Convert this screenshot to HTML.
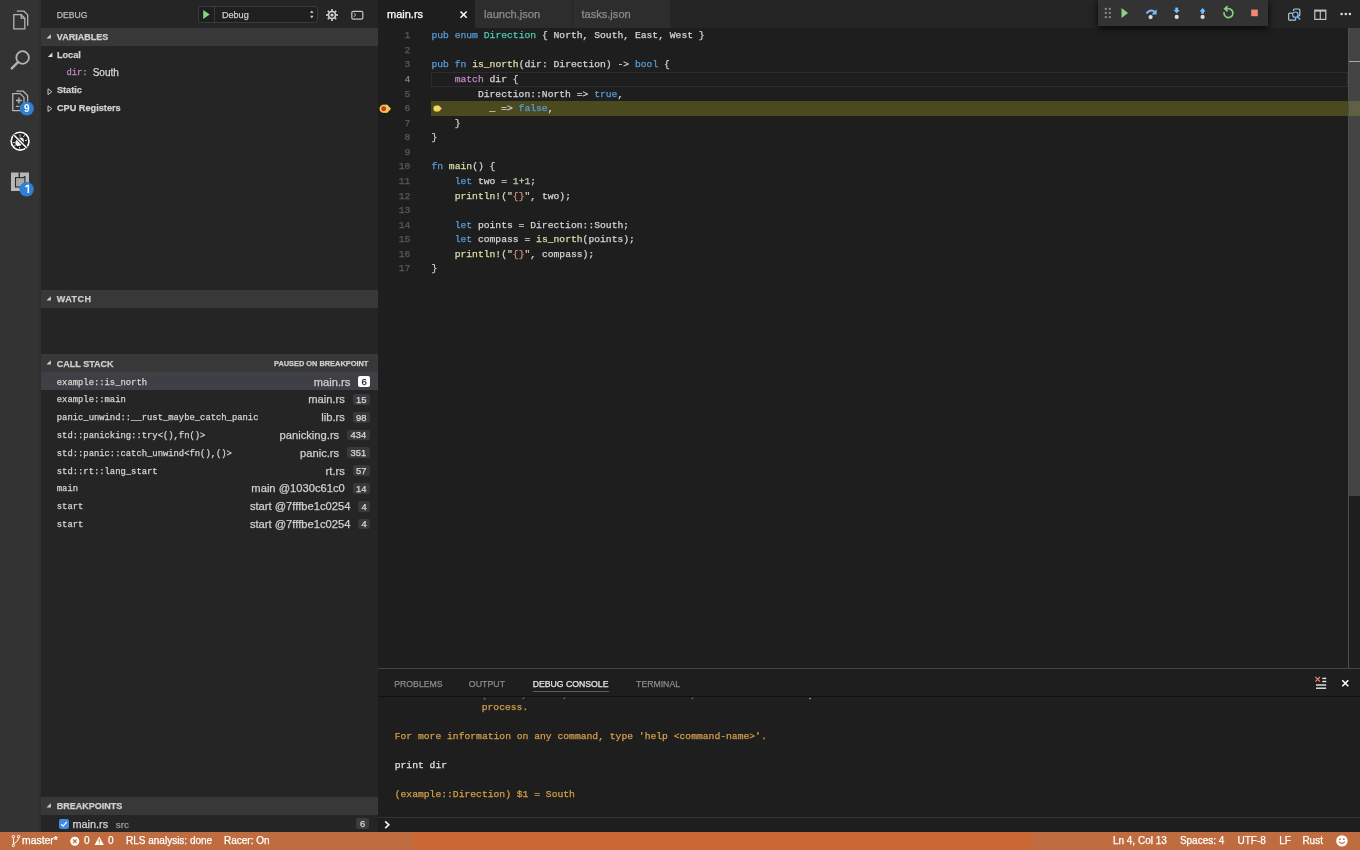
<!DOCTYPE html><html><head><meta charset="utf-8"><style>*{margin:0;padding:0}html,body{width:1360px;height:850px;overflow:hidden;background:#1e1e1e}#root{position:absolute;left:0;top:0;width:1360px;height:850px;will-change:transform;-webkit-text-stroke-width:0.25px}</style></head><body><div id="root"><div style="position:absolute;left:40px;top:0px;width:338px;height:832px;background:#252526;"></div>
<div style="position:absolute;left:0px;top:0px;width:40.6px;height:832px;background:#333333;"></div>
<div style="position:absolute;left:39.4px;top:0px;width:1.2px;height:832px;background:#2f2f2f;"></div>
<div style="position:absolute;left:378px;top:0px;width:982px;height:668px;background:#1e1e1e;"></div>
<div style="position:absolute;left:378px;top:0px;width:982px;height:28.3px;background:#252526;"></div>
<svg width="40" height="200" style="position:absolute;left:0;top:0">
 <g fill="none" stroke="#b4b4b4" stroke-width="1.3">
  <path d="M13.8 14.6h7.4l3.6 3.6v10.6h-11z"/>
  <path d="M21.2 14.6v3.6h3.6"/>
  <path d="M16.8 11.2h7.2l3.7 3.7v10.8"/>
  <circle cx="22.6" cy="57.5" r="6.3" stroke-width="1.8"/>
  <path d="M18 62.2l-6.2 6.2" stroke-width="2.4" stroke-linecap="round"/>
  <path d="M12.8 93.6h7.4l3.8 3.8v13.2h-11.2z"/>
  <path d="M16.4 91.2h6.8l4.4 4.4v6"/>
  <path d="M18.9 97.6v5.8M16 100.5h5.8" stroke-width="1.4"/>
  <path d="M15.9 106.4h3.4" stroke-width="1.2"/>
 </g>
 <circle cx="26.8" cy="108.5" r="7.1" fill="#2f7fd6"/>
 <text x="26.8" y="112.2" font-family="Liberation Sans" font-weight="bold" font-size="10" fill="#fff" text-anchor="middle">9</text>
 <circle cx="20.1" cy="141.2" r="8.9" fill="#232323" stroke="#fff" stroke-width="1.6"/>
 <g fill="#f0f0f0">
  <ellipse cx="19.6" cy="141.8" rx="3.6" ry="4.9" transform="rotate(45 19.6 141.8)"/>
 </g>
 <g stroke="#f0f0f0" stroke-width="0.9" fill="none">
  <path d="M20.2 136.6l-.2-2.2M23.4 137l1.2-1.8M25 140.6l2-.4M14.8 142.4l-1.8.2M15.6 145.2l-1.6 1M19.4 146.8l.4 1.8M22.6 143.4l1.4 2.6"/>
 </g>
 <path d="M13.6 134.7l13 13" stroke="#232323" stroke-width="3.2"/>
 <path d="M13.6 134.7l13 13" stroke="#fff" stroke-width="1.5"/>
 <rect x="11" y="172.5" width="18" height="18.5" fill="#b8b8b8"/>
 <rect x="18.6" y="172.5" width="1.4" height="5" fill="#333"/>
 <rect x="15.5" y="177.6" width="9.4" height="9.4" fill="#a9a9a9" stroke="#2a2a2a" stroke-width="1.1"/>
 <path d="M23.5 176.5l2.2 -0.8-.8 2.2z" fill="#2a2a2a"/>
 <circle cx="26.6" cy="189.3" r="7.2" fill="#2f7fd6"/>
 <path d="M25.4 186.8l1.9-1.3h1v7.5" fill="none" stroke="#fff" stroke-width="1.5"/>
</svg>
<div style="position:absolute;left:56.8px;top:10.72px;line-height:8.6px;font-size:8.6px;font-family:'Liberation Sans',sans-serif;font-weight:400;color:#bbbbbb;white-space:pre;">DEBUG</div>
<div style="position:absolute;left:197.6px;top:5.9px;width:120px;height:17.6px;background:#1f1f1f;border:1px solid #3a3a3a;border-radius:3px;box-sizing:border-box"></div>
<div style="position:absolute;left:214.3px;top:6.5px;width:1px;height:16.4px;background:#3a3a3a;"></div>
<svg width="400" height="30" style="position:absolute;left:0;top:0"><path d="M203.2 10l6.5 4.5-6.5 4.5z" fill="#89d185"/><path d="M310 13l1.8-2.4 1.8 2.4zM310 15.8l1.8 2.4 1.8-2.4z" fill="#cccccc"/></svg>
<div style="position:absolute;left:221.9px;top:10.70px;line-height:9.1px;font-size:9.1px;font-family:'Liberation Sans',sans-serif;font-weight:400;color:#cccccc;white-space:pre;">Debug</div>
<svg width="16" height="16" viewBox="-8 -8 16 16" style="position:absolute;left:323.8px;top:6.7px">
<g fill="#d0d0d0"><rect x="-0.8" y="-6" width="1.6" height="3" transform="rotate(0)"/><rect x="-0.8" y="-6" width="1.6" height="3" transform="rotate(45)"/><rect x="-0.8" y="-6" width="1.6" height="3" transform="rotate(90)"/><rect x="-0.8" y="-6" width="1.6" height="3" transform="rotate(135)"/><rect x="-0.8" y="-6" width="1.6" height="3" transform="rotate(180)"/><rect x="-0.8" y="-6" width="1.6" height="3" transform="rotate(225)"/><rect x="-0.8" y="-6" width="1.6" height="3" transform="rotate(270)"/><rect x="-0.8" y="-6" width="1.6" height="3" transform="rotate(315)"/><circle r="4.3"/></g>
<circle r="2.1" fill="none" stroke="#252526" stroke-width="1.1"/><circle r="0.9" fill="#e0e0e0"/>
</svg>
<svg width="16" height="14" style="position:absolute;left:349px;top:7.5px">
<rect x="2.8" y="3.3" width="11" height="7.8" rx="1.4" fill="none" stroke="#c5c5c5" stroke-width="1.2"/>
<path d="M4.9 5.1l1.8 1.9-1.8 1.9" fill="none" stroke="#c5c5c5" stroke-width="0.9"/>
</svg>
<div style="position:absolute;left:40.6px;top:28px;width:337.4px;height:18px;background:#383839;"></div>
<svg width="8" height="8" style="position:absolute;left:45px;top:33px"><path d="M1.5 5.6L5.8 1.3V5.6z" fill="#d0d0d0"/></svg>
<div style="position:absolute;left:56.8px;top:33.28px;line-height:9px;font-size:9px;font-family:'Liberation Sans',sans-serif;font-weight:700;color:#cfcfcf;white-space:pre;">VARIABLES</div>
<svg width="8" height="8" style="position:absolute;left:47.4px;top:51px"><path d="M0.8 6L5.4 1.4V6z" fill="#d8d8d8"/></svg>
<div style="position:absolute;left:56.9px;top:50.51px;line-height:9.2px;font-size:9.2px;font-family:'Liberation Sans',sans-serif;font-weight:700;color:#d0d0d0;white-space:pre;">Local</div>
<div style="position:absolute;left:66.4px;top:69.38px;line-height:8.9px;font-size:8.9px;font-family:'Liberation Mono',monospace;font-weight:400;color:#c586c0;white-space:pre;">dir:</div>
<div style="position:absolute;left:92.7px;top:67.73px;line-height:10px;font-size:10px;font-family:'Liberation Sans',sans-serif;font-weight:400;color:#d4d4d4;white-space:pre;">South</div>
<svg width="8" height="10" style="position:absolute;left:47.4px;top:87.5px"><path d="M1 0.8L4.8 3.7 1 6.6z" fill="none" stroke="#c8c8c8" stroke-width="1"/></svg>
<div style="position:absolute;left:56.9px;top:86.11px;line-height:9.2px;font-size:9.2px;font-family:'Liberation Sans',sans-serif;font-weight:700;color:#d0d0d0;white-space:pre;">Static</div>
<svg width="8" height="10" style="position:absolute;left:47.4px;top:105.3px"><path d="M1 0.8L4.8 3.7 1 6.6z" fill="none" stroke="#c8c8c8" stroke-width="1"/></svg>
<div style="position:absolute;left:56.9px;top:103.91px;line-height:9.2px;font-size:9.2px;font-family:'Liberation Sans',sans-serif;font-weight:700;color:#d0d0d0;white-space:pre;">CPU Registers</div>
<div style="position:absolute;left:40.6px;top:290px;width:337.4px;height:18px;background:#383839;"></div>
<svg width="8" height="8" style="position:absolute;left:45px;top:295px"><path d="M1.5 5.6L5.8 1.3V5.6z" fill="#d0d0d0"/></svg>
<div style="position:absolute;left:56.8px;top:295.28px;line-height:9px;font-size:9px;font-family:'Liberation Sans',sans-serif;font-weight:700;letter-spacing:0.45px;color:#cfcfcf;white-space:pre;">WATCH</div>
<div style="position:absolute;left:40.6px;top:354.4px;width:337.4px;height:18px;background:#383839;"></div>
<svg width="8" height="8" style="position:absolute;left:45px;top:359.4px"><path d="M1.5 5.6L5.8 1.3V5.6z" fill="#d0d0d0"/></svg>
<div style="position:absolute;left:56.8px;top:359.68px;line-height:9px;font-size:9px;font-family:'Liberation Sans',sans-serif;font-weight:700;color:#cfcfcf;white-space:pre;">CALL STACK</div>
<div style="position:absolute;right:991.7px;top:360.24px;line-height:7.4px;font-size:7.4px;font-family:'Liberation Sans',sans-serif;font-weight:700;color:#cfcfcf;white-space:pre;">PAUSED ON BREAKPOINT</div>
<div style="position:absolute;left:40.6px;top:372.4px;width:337.4px;height:17.8px;background:#3f3f46;"></div>
<div style="position:absolute;left:56.8px;top:378.61px;line-height:8.86px;font-size:8.86px;font-family:'Liberation Mono',monospace;font-weight:400;color:#d4d4d4;white-space:pre;">example::is_north</div>
<div style="position:absolute;left:358.1px;top:376.2px;width:11.899999999999999px;height:10.9px;background:#ffffff;border-radius:2px"></div>
<div style="position:absolute;left:358.1px;top:376.94px;line-height:9.4px;font-size:9.4px;font-family:'Liberation Sans',sans-serif;font-weight:400;color:#222;white-space:pre;width:11.899999999999999px;text-align:center">6</div>
<div style="position:absolute;right:1009.5999999999999px;top:376.52px;line-height:11.2px;font-size:11.2px;font-family:'Liberation Sans',sans-serif;font-weight:400;color:#d0d0d0;white-space:pre;">main.rs</div>
<div style="position:absolute;left:56.8px;top:396.41px;line-height:8.86px;font-size:8.86px;font-family:'Liberation Mono',monospace;font-weight:400;color:#d4d4d4;white-space:pre;">example::main</div>
<div style="position:absolute;left:352.5px;top:394.0px;width:17.5px;height:10.9px;background:#393939;border-radius:2px"></div>
<div style="position:absolute;left:352.5px;top:394.74px;line-height:9.4px;font-size:9.4px;font-family:'Liberation Sans',sans-serif;font-weight:400;color:#d8d8d8;white-space:pre;width:17.5px;text-align:center">15</div>
<div style="position:absolute;right:1015.2px;top:394.32px;line-height:11.2px;font-size:11.2px;font-family:'Liberation Sans',sans-serif;font-weight:400;color:#d0d0d0;white-space:pre;">main.rs</div>
<div style="position:absolute;left:56.8px;top:414.21px;line-height:8.86px;font-size:8.86px;font-family:'Liberation Mono',monospace;font-weight:400;color:#d4d4d4;white-space:pre;">panic_unwind::__rust_maybe_catch_panic</div>
<div style="position:absolute;left:352.5px;top:411.8px;width:17.5px;height:10.9px;background:#393939;border-radius:2px"></div>
<div style="position:absolute;left:352.5px;top:412.54px;line-height:9.4px;font-size:9.4px;font-family:'Liberation Sans',sans-serif;font-weight:400;color:#d8d8d8;white-space:pre;width:17.5px;text-align:center">98</div>
<div style="position:absolute;right:1015.2px;top:412.12px;line-height:11.2px;font-size:11.2px;font-family:'Liberation Sans',sans-serif;font-weight:400;color:#d0d0d0;white-space:pre;">lib.rs</div>
<div style="position:absolute;left:56.8px;top:432.01px;line-height:8.86px;font-size:8.86px;font-family:'Liberation Mono',monospace;font-weight:400;color:#d4d4d4;white-space:pre;">std::panicking::try&lt;(),fn()&gt;</div>
<div style="position:absolute;left:346.9px;top:429.59999999999997px;width:23.099999999999998px;height:10.9px;background:#393939;border-radius:2px"></div>
<div style="position:absolute;left:346.9px;top:430.34px;line-height:9.4px;font-size:9.4px;font-family:'Liberation Sans',sans-serif;font-weight:400;color:#d8d8d8;white-space:pre;width:23.099999999999998px;text-align:center">434</div>
<div style="position:absolute;right:1020.8px;top:429.92px;line-height:11.2px;font-size:11.2px;font-family:'Liberation Sans',sans-serif;font-weight:400;color:#d0d0d0;white-space:pre;">panicking.rs</div>
<div style="position:absolute;left:56.8px;top:449.81px;line-height:8.86px;font-size:8.86px;font-family:'Liberation Mono',monospace;font-weight:400;color:#d4d4d4;white-space:pre;">std::panic::catch_unwind&lt;fn(),()&gt;</div>
<div style="position:absolute;left:346.9px;top:447.4px;width:23.099999999999998px;height:10.9px;background:#393939;border-radius:2px"></div>
<div style="position:absolute;left:346.9px;top:448.14px;line-height:9.4px;font-size:9.4px;font-family:'Liberation Sans',sans-serif;font-weight:400;color:#d8d8d8;white-space:pre;width:23.099999999999998px;text-align:center">351</div>
<div style="position:absolute;right:1020.8px;top:447.72px;line-height:11.2px;font-size:11.2px;font-family:'Liberation Sans',sans-serif;font-weight:400;color:#d0d0d0;white-space:pre;">panic.rs</div>
<div style="position:absolute;left:56.8px;top:467.61px;line-height:8.86px;font-size:8.86px;font-family:'Liberation Mono',monospace;font-weight:400;color:#d4d4d4;white-space:pre;">std::rt::lang_start</div>
<div style="position:absolute;left:352.5px;top:465.2px;width:17.5px;height:10.9px;background:#393939;border-radius:2px"></div>
<div style="position:absolute;left:352.5px;top:465.94px;line-height:9.4px;font-size:9.4px;font-family:'Liberation Sans',sans-serif;font-weight:400;color:#d8d8d8;white-space:pre;width:17.5px;text-align:center">57</div>
<div style="position:absolute;right:1015.2px;top:465.52px;line-height:11.2px;font-size:11.2px;font-family:'Liberation Sans',sans-serif;font-weight:400;color:#d0d0d0;white-space:pre;">rt.rs</div>
<div style="position:absolute;left:56.8px;top:485.41px;line-height:8.86px;font-size:8.86px;font-family:'Liberation Mono',monospace;font-weight:400;color:#d4d4d4;white-space:pre;">main</div>
<div style="position:absolute;left:352.5px;top:483.0px;width:17.5px;height:10.9px;background:#393939;border-radius:2px"></div>
<div style="position:absolute;left:352.5px;top:483.74px;line-height:9.4px;font-size:9.4px;font-family:'Liberation Sans',sans-serif;font-weight:400;color:#d8d8d8;white-space:pre;width:17.5px;text-align:center">14</div>
<div style="position:absolute;right:1015.2px;top:483.32px;line-height:11.2px;font-size:11.2px;font-family:'Liberation Sans',sans-serif;font-weight:400;color:#d0d0d0;white-space:pre;">main @1030c61c0</div>
<div style="position:absolute;left:56.8px;top:503.21px;line-height:8.86px;font-size:8.86px;font-family:'Liberation Mono',monospace;font-weight:400;color:#d4d4d4;white-space:pre;">start</div>
<div style="position:absolute;left:358.1px;top:500.8px;width:11.899999999999999px;height:10.9px;background:#393939;border-radius:2px"></div>
<div style="position:absolute;left:358.1px;top:501.54px;line-height:9.4px;font-size:9.4px;font-family:'Liberation Sans',sans-serif;font-weight:400;color:#d8d8d8;white-space:pre;width:11.899999999999999px;text-align:center">4</div>
<div style="position:absolute;right:1009.5999999999999px;top:501.12px;line-height:11.2px;font-size:11.2px;font-family:'Liberation Sans',sans-serif;font-weight:400;color:#d0d0d0;white-space:pre;">start @7fffbe1c0254</div>
<div style="position:absolute;left:56.8px;top:521.01px;line-height:8.86px;font-size:8.86px;font-family:'Liberation Mono',monospace;font-weight:400;color:#d4d4d4;white-space:pre;">start</div>
<div style="position:absolute;left:358.1px;top:518.5999999999999px;width:11.899999999999999px;height:10.9px;background:#393939;border-radius:2px"></div>
<div style="position:absolute;left:358.1px;top:519.34px;line-height:9.4px;font-size:9.4px;font-family:'Liberation Sans',sans-serif;font-weight:400;color:#d8d8d8;white-space:pre;width:11.899999999999999px;text-align:center">4</div>
<div style="position:absolute;right:1009.5999999999999px;top:518.92px;line-height:11.2px;font-size:11.2px;font-family:'Liberation Sans',sans-serif;font-weight:400;color:#d0d0d0;white-space:pre;">start @7fffbe1c0254</div>
<div style="position:absolute;left:40.6px;top:796.6px;width:337.4px;height:18px;background:#383839;"></div>
<svg width="8" height="8" style="position:absolute;left:45px;top:801.6px"><path d="M1.5 5.6L5.8 1.3V5.6z" fill="#d0d0d0"/></svg>
<div style="position:absolute;left:56.8px;top:801.88px;line-height:9px;font-size:9px;font-family:'Liberation Sans',sans-serif;font-weight:700;color:#cfcfcf;white-space:pre;">BREAKPOINTS</div>
<div style="position:absolute;left:59px;top:819.2px;width:9.8px;height:9.9px;background:#3c8ce6;border-radius:2px"></div>
<svg width="10" height="10" style="position:absolute;left:59px;top:819.2px"><path d="M2.2 5.2l2 2 3.6-4.4" fill="none" stroke="#fff" stroke-width="1.2"/></svg>
<div style="position:absolute;left:72.4px;top:819.17px;line-height:10.9px;font-size:10.9px;font-family:'Liberation Sans',sans-serif;font-weight:400;color:#d4d4d4;white-space:pre;">main.rs</div>
<div style="position:absolute;left:115.8px;top:820.00px;line-height:9.8px;font-size:9.8px;font-family:'Liberation Sans',sans-serif;font-weight:400;color:#9a9a9a;white-space:pre;">src</div>
<div style="position:absolute;left:355.8px;top:818.4px;width:13.6px;height:11px;background:#3c3c3c;border-radius:2px"></div>
<div style="position:absolute;left:355.8px;top:819.24px;line-height:9.4px;font-size:9.4px;font-family:'Liberation Sans',sans-serif;font-weight:400;color:#d8d8d8;white-space:pre;width:13.6px;text-align:center">6</div>
<div style="position:absolute;left:378px;top:0px;width:97.2px;height:28.3px;background:#1e1e1e;"></div>
<div style="position:absolute;left:475.2px;top:0px;width:96.6px;height:28.3px;background:#2d2d2d;"></div>
<div style="position:absolute;left:572.2px;top:0px;width:97.5px;height:28.3px;background:#2d2d2d;"></div>
<div style="position:absolute;left:571.8px;top:0px;width:0.8px;height:28.3px;background:#252526;"></div>
<div style="position:absolute;left:387px;top:8.99px;line-height:11px;font-size:11px;font-family:'Liberation Sans',sans-serif;font-weight:400;color:#ffffff;white-space:pre;">main.rs</div>
<svg width="10" height="10" style="position:absolute;left:458.5px;top:9.8px"><path d="M1.5 1.5l6.2 6.2M7.7 1.5L1.5 7.7" stroke="#ffffff" stroke-width="1.5"/></svg>
<div style="position:absolute;left:484px;top:8.90px;line-height:11.1px;font-size:11.1px;font-family:'Liberation Sans',sans-serif;font-weight:400;color:#8c8c8c;white-space:pre;">launch.json</div>
<div style="position:absolute;left:581.4px;top:8.90px;line-height:11.1px;font-size:11.1px;font-family:'Liberation Sans',sans-serif;font-weight:400;color:#8c8c8c;white-space:pre;">tasks.json</div>
<div style="position:absolute;left:431px;top:72.03999999999999px;width:917px;height:14.57px;background:transparent;border:1px solid #2c2c2c;box-sizing:border-box"></div>
<div style="position:absolute;left:431.3px;top:101.17999999999999px;width:916.7px;height:14.57px;background:#4b4a1e;"></div>
<div style="position:absolute;right:949.7px;top:31.34px;line-height:9.7px;font-size:9.7px;font-family:'Liberation Mono',monospace;font-weight:400;color:#5a5a5a;white-space:pre;">1</div>
<div style="position:absolute;left:431.4px;top:31.34px;line-height:9.7px;font-size:9.7px;font-family:'Liberation Mono',monospace;font-weight:400;color:#d4d4d4;white-space:pre;"><span style="color:#569cd6">pub</span><span style="color:#d4d4d4"> </span><span style="color:#569cd6">enum</span><span style="color:#d4d4d4"> </span><span style="color:#4ec9b0">Direction</span><span style="color:#d4d4d4"> { North, South, East, West }</span></div>
<div style="position:absolute;right:949.7px;top:45.91px;line-height:9.7px;font-size:9.7px;font-family:'Liberation Mono',monospace;font-weight:400;color:#5a5a5a;white-space:pre;">2</div>
<div style="position:absolute;right:949.7px;top:60.48px;line-height:9.7px;font-size:9.7px;font-family:'Liberation Mono',monospace;font-weight:400;color:#5a5a5a;white-space:pre;">3</div>
<div style="position:absolute;left:431.4px;top:60.48px;line-height:9.7px;font-size:9.7px;font-family:'Liberation Mono',monospace;font-weight:400;color:#d4d4d4;white-space:pre;"><span style="color:#569cd6">pub</span><span style="color:#d4d4d4"> </span><span style="color:#569cd6">fn</span><span style="color:#d4d4d4"> </span><span style="color:#dcdcaa">is_north</span><span style="color:#d4d4d4">(dir: Direction) -&gt; </span><span style="color:#569cd6">bool</span><span style="color:#d4d4d4"> {</span></div>
<div style="position:absolute;right:949.7px;top:75.05px;line-height:9.7px;font-size:9.7px;font-family:'Liberation Mono',monospace;font-weight:400;color:#858585;white-space:pre;">4</div>
<div style="position:absolute;left:431.4px;top:75.05px;line-height:9.7px;font-size:9.7px;font-family:'Liberation Mono',monospace;font-weight:400;color:#d4d4d4;white-space:pre;"><span style="color:#d4d4d4">    </span><span style="color:#c586c0">match</span><span style="color:#d4d4d4"> dir {</span></div>
<div style="position:absolute;right:949.7px;top:89.62px;line-height:9.7px;font-size:9.7px;font-family:'Liberation Mono',monospace;font-weight:400;color:#5a5a5a;white-space:pre;">5</div>
<div style="position:absolute;left:431.4px;top:89.62px;line-height:9.7px;font-size:9.7px;font-family:'Liberation Mono',monospace;font-weight:400;color:#d4d4d4;white-space:pre;"><span style="color:#d4d4d4">        Direction::North =&gt; </span><span style="color:#569cd6">true</span><span style="color:#d4d4d4">,</span></div>
<div style="position:absolute;right:949.7px;top:104.19px;line-height:9.7px;font-size:9.7px;font-family:'Liberation Mono',monospace;font-weight:400;color:#5a5a5a;white-space:pre;">6</div>
<div style="position:absolute;left:431.4px;top:104.19px;line-height:9.7px;font-size:9.7px;font-family:'Liberation Mono',monospace;font-weight:400;color:#d4d4d4;white-space:pre;"><span style="color:#d4d4d4">          _ =&gt; </span><span style="color:#569cd6">false</span><span style="color:#d4d4d4">,</span></div>
<div style="position:absolute;right:949.7px;top:118.76px;line-height:9.7px;font-size:9.7px;font-family:'Liberation Mono',monospace;font-weight:400;color:#5a5a5a;white-space:pre;">7</div>
<div style="position:absolute;left:431.4px;top:118.76px;line-height:9.7px;font-size:9.7px;font-family:'Liberation Mono',monospace;font-weight:400;color:#d4d4d4;white-space:pre;"><span style="color:#d4d4d4">    }</span></div>
<div style="position:absolute;right:949.7px;top:133.33px;line-height:9.7px;font-size:9.7px;font-family:'Liberation Mono',monospace;font-weight:400;color:#5a5a5a;white-space:pre;">8</div>
<div style="position:absolute;left:431.4px;top:133.33px;line-height:9.7px;font-size:9.7px;font-family:'Liberation Mono',monospace;font-weight:400;color:#d4d4d4;white-space:pre;"><span style="color:#d4d4d4">}</span></div>
<div style="position:absolute;right:949.7px;top:147.90px;line-height:9.7px;font-size:9.7px;font-family:'Liberation Mono',monospace;font-weight:400;color:#5a5a5a;white-space:pre;">9</div>
<div style="position:absolute;right:949.7px;top:162.47px;line-height:9.7px;font-size:9.7px;font-family:'Liberation Mono',monospace;font-weight:400;color:#5a5a5a;white-space:pre;">10</div>
<div style="position:absolute;left:431.4px;top:162.47px;line-height:9.7px;font-size:9.7px;font-family:'Liberation Mono',monospace;font-weight:400;color:#d4d4d4;white-space:pre;"><span style="color:#569cd6">fn</span><span style="color:#d4d4d4"> </span><span style="color:#dcdcaa">main</span><span style="color:#d4d4d4">() {</span></div>
<div style="position:absolute;right:949.7px;top:177.04px;line-height:9.7px;font-size:9.7px;font-family:'Liberation Mono',monospace;font-weight:400;color:#5a5a5a;white-space:pre;">11</div>
<div style="position:absolute;left:431.4px;top:177.04px;line-height:9.7px;font-size:9.7px;font-family:'Liberation Mono',monospace;font-weight:400;color:#d4d4d4;white-space:pre;"><span style="color:#d4d4d4">    </span><span style="color:#569cd6">let</span><span style="color:#d4d4d4"> two = </span><span style="color:#b5cea8">1</span><span style="color:#d4d4d4">+</span><span style="color:#b5cea8">1</span><span style="color:#d4d4d4">;</span></div>
<div style="position:absolute;right:949.7px;top:191.61px;line-height:9.7px;font-size:9.7px;font-family:'Liberation Mono',monospace;font-weight:400;color:#5a5a5a;white-space:pre;">12</div>
<div style="position:absolute;left:431.4px;top:191.61px;line-height:9.7px;font-size:9.7px;font-family:'Liberation Mono',monospace;font-weight:400;color:#d4d4d4;white-space:pre;"><span style="color:#d4d4d4">    </span><span style="color:#dcdcaa">println!</span><span style="color:#d4d4d4">(</span><span style="color:#d6c3b4">"</span><span style="color:#ce9178">{}</span><span style="color:#d6c3b4">"</span><span style="color:#d4d4d4">, two);</span></div>
<div style="position:absolute;right:949.7px;top:206.18px;line-height:9.7px;font-size:9.7px;font-family:'Liberation Mono',monospace;font-weight:400;color:#5a5a5a;white-space:pre;">13</div>
<div style="position:absolute;right:949.7px;top:220.75px;line-height:9.7px;font-size:9.7px;font-family:'Liberation Mono',monospace;font-weight:400;color:#5a5a5a;white-space:pre;">14</div>
<div style="position:absolute;left:431.4px;top:220.75px;line-height:9.7px;font-size:9.7px;font-family:'Liberation Mono',monospace;font-weight:400;color:#d4d4d4;white-space:pre;"><span style="color:#d4d4d4">    </span><span style="color:#569cd6">let</span><span style="color:#d4d4d4"> points = Direction::South;</span></div>
<div style="position:absolute;right:949.7px;top:235.32px;line-height:9.7px;font-size:9.7px;font-family:'Liberation Mono',monospace;font-weight:400;color:#5a5a5a;white-space:pre;">15</div>
<div style="position:absolute;left:431.4px;top:235.32px;line-height:9.7px;font-size:9.7px;font-family:'Liberation Mono',monospace;font-weight:400;color:#d4d4d4;white-space:pre;"><span style="color:#d4d4d4">    </span><span style="color:#569cd6">let</span><span style="color:#d4d4d4"> compass = </span><span style="color:#dcdcaa">is_north</span><span style="color:#d4d4d4">(points);</span></div>
<div style="position:absolute;right:949.7px;top:249.89px;line-height:9.7px;font-size:9.7px;font-family:'Liberation Mono',monospace;font-weight:400;color:#5a5a5a;white-space:pre;">16</div>
<div style="position:absolute;left:431.4px;top:249.89px;line-height:9.7px;font-size:9.7px;font-family:'Liberation Mono',monospace;font-weight:400;color:#d4d4d4;white-space:pre;"><span style="color:#d4d4d4">    </span><span style="color:#dcdcaa">println!</span><span style="color:#d4d4d4">(</span><span style="color:#d6c3b4">"</span><span style="color:#ce9178">{}</span><span style="color:#d6c3b4">"</span><span style="color:#d4d4d4">, compass);</span></div>
<div style="position:absolute;right:949.7px;top:264.46px;line-height:9.7px;font-size:9.7px;font-family:'Liberation Mono',monospace;font-weight:400;color:#5a5a5a;white-space:pre;">17</div>
<div style="position:absolute;left:431.4px;top:264.46px;line-height:9.7px;font-size:9.7px;font-family:'Liberation Mono',monospace;font-weight:400;color:#d4d4d4;white-space:pre;"><span style="color:#d4d4d4">}</span></div>
<svg width="16" height="12" style="position:absolute;left:379px;top:103.5px"><path d="M4.7 0.4h3.6l3.9 4.35-3.9 4.35h-3.6A4.35 4.35 0 0 1 4.7 0.4z" fill="#f0cc4e" stroke="rgba(0,0,0,0.5)" stroke-width="0.5"/><circle cx="4.7" cy="4.75" r="2.45" fill="#d0312d"/></svg>
<svg width="12" height="10" style="position:absolute;left:433px;top:104.6px"><path d="M3.5 0.4h2.4l2.9 3.1-2.9 3.1h-2.4A3.1 3.1 0 0 1 3.5 0.4z" fill="#f2d95e"/></svg>
<div style="position:absolute;left:1348px;top:28.3px;width:1.2px;height:639.7px;background:#4e4e4e;"></div>
<div style="position:absolute;left:1349.2px;top:28.3px;width:11px;height:467.7px;background:#444444;"></div>
<div style="position:absolute;left:1349.2px;top:60.6px;width:11px;height:1.3px;background:#a8a8a8;"></div>
<div style="position:absolute;left:1349.2px;top:101.17999999999999px;width:11px;height:14.57px;background:rgba(150,150,70,0.35);"></div>
<svg width="80" height="28" style="position:absolute;left:1280px;top:0">
 <g fill="none" stroke="#c5c5c5" stroke-width="1.2">
  <path d="M12.5 13.2h-2.8q-1 0-1 1v5q0 1 1 1h5q1 0 1-1v-1.2"/>
  <path d="M13.5 11v-1q0-1 1-1h4.3q1 0 1 1v5q0 1-1 1h-1"/>
 </g>
 <circle cx="15.3" cy="14.7" r="2.7" fill="none" stroke="#75beff" stroke-width="1.2"/>
 <path d="M17.2 16.6l3 3" stroke="#75beff" stroke-width="1.4"/>
 <rect x="34.8" y="10.2" width="11" height="9.2" fill="none" stroke="#c5c5c5" stroke-width="1.2"/>
 <rect x="35" y="10" width="10.8" height="1.6" fill="#c5c5c5"/>
 <path d="M40.3 10.5v9" stroke="#c5c5c5" stroke-width="1.1"/>
 <g fill="#e0e0e0"><circle cx="61.6" cy="14.1" r="1.25"/><circle cx="65.8" cy="14.1" r="1.25"/><circle cx="69.9" cy="14.1" r="1.25"/></g>
</svg>
<div style="position:absolute;left:1098.3px;top:0px;width:169.4px;height:25.5px;background:#333333;box-shadow:0 2px 7px rgba(0,0,0,0.95)"></div>
<svg width="170" height="26" style="position:absolute;left:1098.3px;top:0">
 <g fill="#8a8a8a">
  <rect x="6.8" y="7.9" width="2" height="2"/><rect x="10.8" y="7.9" width="2" height="2"/>
  <rect x="6.8" y="11.9" width="2" height="2"/><rect x="10.8" y="11.9" width="2" height="2"/>
  <rect x="6.8" y="16.1" width="2" height="2"/><rect x="10.8" y="16.1" width="2" height="2"/>
 </g>
 <path d="M23.5 7.9l6.6 5-6.6 5z" fill="#89d185"/>
 <path d="M48.4 13.4q4.4-5.2 8.8-1.2" fill="none" stroke="#75beff" stroke-width="1.9"/>
 <path d="M58.6 9.2v5.2h-5.2z" fill="#75beff"/>
 <circle cx="52.6" cy="17.1" r="2.1" fill="#dcdcdc"/>
 <rect x="77.3" y="7.6" width="2.8" height="3" fill="#75beff"/>
 <path d="M75.6 9.9h6.2l-3.1 3.3z" fill="#75beff"/>
 <circle cx="78.7" cy="16.9" r="2.1" fill="#dcdcdc"/>
 <rect x="103.2" y="11" width="2.8" height="2.7" fill="#75beff"/>
 <path d="M101.5 11.6h6.2l-3.1-3.7z" fill="#75beff"/>
 <circle cx="104.6" cy="16.9" r="2.1" fill="#dcdcdc"/>
 <path d="M130.4 8.7A4.45 4.45 0 1 1 126.1 12.1" fill="none" stroke="#89d185" stroke-width="1.7"/>
 <path d="M129.6 6.1L126.8 8.7 129.6 11.3" fill="none" stroke="#89d185" stroke-width="1.7"/>
 <path d="M127 8.7h3.6" stroke="#89d185" stroke-width="1.7"/>
 <rect x="153.2" y="9.6" width="6.6" height="6.6" fill="#f48771"/>
</svg>
<div style="position:absolute;left:378px;top:668px;width:982px;height:164px;background:#1e1e1e;"></div>
<div style="position:absolute;left:378px;top:668px;width:982px;height:1px;background:#454545;"></div>
<div style="position:absolute;left:378px;top:695.8px;width:982px;height:1.2px;background:rgba(0,0,0,0.45);"></div>
<div style="position:absolute;left:394.3px;top:679.64px;line-height:8.7px;font-size:8.7px;font-family:'Liberation Sans',sans-serif;font-weight:400;color:#8b8b8b;white-space:pre;">PROBLEMS</div>
<div style="position:absolute;left:468.8px;top:679.64px;line-height:8.7px;font-size:8.7px;font-family:'Liberation Sans',sans-serif;font-weight:400;color:#8b8b8b;white-space:pre;letter-spacing:0.1px">OUTPUT</div>
<div style="position:absolute;left:532.7px;top:679.64px;line-height:8.7px;font-size:8.7px;font-family:'Liberation Sans',sans-serif;font-weight:400;color:#e7e7e7;white-space:pre;">DEBUG CONSOLE</div>
<div style="position:absolute;left:532.7px;top:690.6px;width:76.1px;height:1px;background:#5a5a5a;"></div>
<div style="position:absolute;left:636.1px;top:679.64px;line-height:8.7px;font-size:8.7px;font-family:'Liberation Sans',sans-serif;font-weight:400;color:#8b8b8b;white-space:pre;">TERMINAL</div>
<svg width="50" height="20" style="position:absolute;left:1310px;top:674px">
 <g fill="#e8e8e8"><rect x="12.3" y="3.7" width="3.9" height="1.4"/><rect x="12.3" y="6.8" width="3.9" height="1.4"/><rect x="6" y="10.3" width="10.2" height="1.4"/><rect x="6" y="13.5" width="10.2" height="1.4"/></g>
 <path d="M5.4 3l4.6 4.6M10 3L5.4 7.6" stroke="#f48771" stroke-width="1.1"/>
 <path d="M32.3 6.3l6 6M38.3 6.3l-6 6" stroke="#ffffff" stroke-width="1.6"/>
</svg>
<svg width="400" height="6" style="position:absolute;left:470px;top:696.5px"><g stroke="#d39f4b" stroke-width="1" fill="none">
<path d="M13.6 1.2q.8 .8 2 1"/><path d="M52.6 1.8q1-.4 1.6-1.2"/><path d="M93.6 1.6q1-.3 1.6-1.1"/><path d="M221.6 1.8q1-.3 1.6-1.1"/><path d="M339 1.8q1 .3 2-.9"/></g></svg>
<div style="position:absolute;left:481.7px;top:703.16px;line-height:9.7px;font-size:9.7px;font-family:'Liberation Mono',monospace;font-weight:400;color:#d39f4b;white-space:pre;">process.</div>
<div style="position:absolute;left:394.7px;top:732.16px;line-height:9.7px;font-size:9.7px;font-family:'Liberation Mono',monospace;font-weight:400;color:#d39f4b;white-space:pre;">For more information on any command, type 'help &lt;command-name&gt;'.</div>
<div style="position:absolute;left:394.7px;top:761.16px;line-height:9.7px;font-size:9.7px;font-family:'Liberation Mono',monospace;font-weight:400;color:#e0e0e0;white-space:pre;">print dir</div>
<div style="position:absolute;left:394.7px;top:790.36px;line-height:9.7px;font-size:9.7px;font-family:'Liberation Mono',monospace;font-weight:400;color:#d39f4b;white-space:pre;">(example::Direction) $1 = South</div>
<div style="position:absolute;left:378px;top:817px;width:982px;height:1px;background:#333333;"></div>
<svg width="10" height="12" style="position:absolute;left:383px;top:819px"><path d="M2.2 2.4l3.6 3.4-3.6 3.4" fill="none" stroke="#f0f0f0" stroke-width="1.7"/></svg>
<div style="position:absolute;left:0px;top:832px;width:1360px;height:18px;background:#bf6c40;"></div>
<div style="position:absolute;left:413px;top:832px;width:619.6px;height:18px;background:#cb6734;"></div>
<svg width="120" height="18" style="position:absolute;left:0;top:832px">
 <g fill="none" stroke="#fff" stroke-width="1">
  <circle cx="13.4" cy="4.6" r="1.2"/><circle cx="18.6" cy="4.6" r="1.2"/><circle cx="13.4" cy="13.4" r="1.2"/>
  <path d="M13.4 5.8v6.4M18.6 5.8q0 3.4-5 6"/>
 </g>
 <circle cx="74.8" cy="9.3" r="4.5" fill="#fff"/>
 <path d="M73 7.5l3.6 3.6M76.6 7.5L73 11.1" stroke="#c96a3a" stroke-width="1.2"/>
 <path d="M99.2 4.4l4.6 8.6h-9.2z" fill="#fff"/>
 <path d="M99.2 7.3v3" stroke="#c96a3a" stroke-width="1.1"/><circle cx="99.2" cy="11.6" r=".6" fill="#c96a3a"/>
</svg>
<div style="position:absolute;left:22px;top:835.80px;line-height:10.4px;font-size:10.4px;font-family:'Liberation Sans',sans-serif;font-weight:400;color:#ffffff;white-space:pre;">master*</div>
<div style="position:absolute;left:84px;top:836.13px;line-height:10px;font-size:10px;font-family:'Liberation Sans',sans-serif;font-weight:400;color:#ffffff;white-space:pre;">0</div>
<div style="position:absolute;left:108px;top:836.13px;line-height:10px;font-size:10px;font-family:'Liberation Sans',sans-serif;font-weight:400;color:#ffffff;white-space:pre;">0</div>
<div style="position:absolute;left:126px;top:836.13px;line-height:10px;font-size:10px;font-family:'Liberation Sans',sans-serif;font-weight:400;color:#ffffff;white-space:pre;">RLS analysis: done</div>
<div style="position:absolute;left:224px;top:836.13px;line-height:10px;font-size:10px;font-family:'Liberation Sans',sans-serif;font-weight:400;color:#ffffff;white-space:pre;">Racer: On</div>
<div style="position:absolute;left:1112.9px;top:836.33px;line-height:10px;font-size:10px;font-family:'Liberation Sans',sans-serif;font-weight:400;color:#ffffff;white-space:pre;">Ln 4, Col 13</div>
<div style="position:absolute;left:1179.9px;top:836.33px;line-height:10px;font-size:10px;font-family:'Liberation Sans',sans-serif;font-weight:400;color:#ffffff;white-space:pre;">Spaces: 4</div>
<div style="position:absolute;left:1237.5px;top:836.33px;line-height:10px;font-size:10px;font-family:'Liberation Sans',sans-serif;font-weight:400;color:#ffffff;white-space:pre;">UTF-8</div>
<div style="position:absolute;left:1279.3px;top:836.33px;line-height:10px;font-size:10px;font-family:'Liberation Sans',sans-serif;font-weight:400;color:#ffffff;white-space:pre;">LF</div>
<div style="position:absolute;left:1302.4px;top:836.33px;line-height:10px;font-size:10px;font-family:'Liberation Sans',sans-serif;font-weight:400;color:#ffffff;white-space:pre;">Rust</div>
<svg width="14" height="14" style="position:absolute;left:1334.5px;top:834px">
 <circle cx="6.9" cy="6.9" r="5.7" fill="#fff"/>
 <circle cx="5" cy="5.2" r=".9" fill="#c96a3a"/><circle cx="8.8" cy="5.2" r=".9" fill="#c96a3a"/>
 <path d="M3.9 7.6q3 3.6 6 0" fill="none" stroke="#c96a3a" stroke-width="1.1"/>
</svg></div></body></html>
